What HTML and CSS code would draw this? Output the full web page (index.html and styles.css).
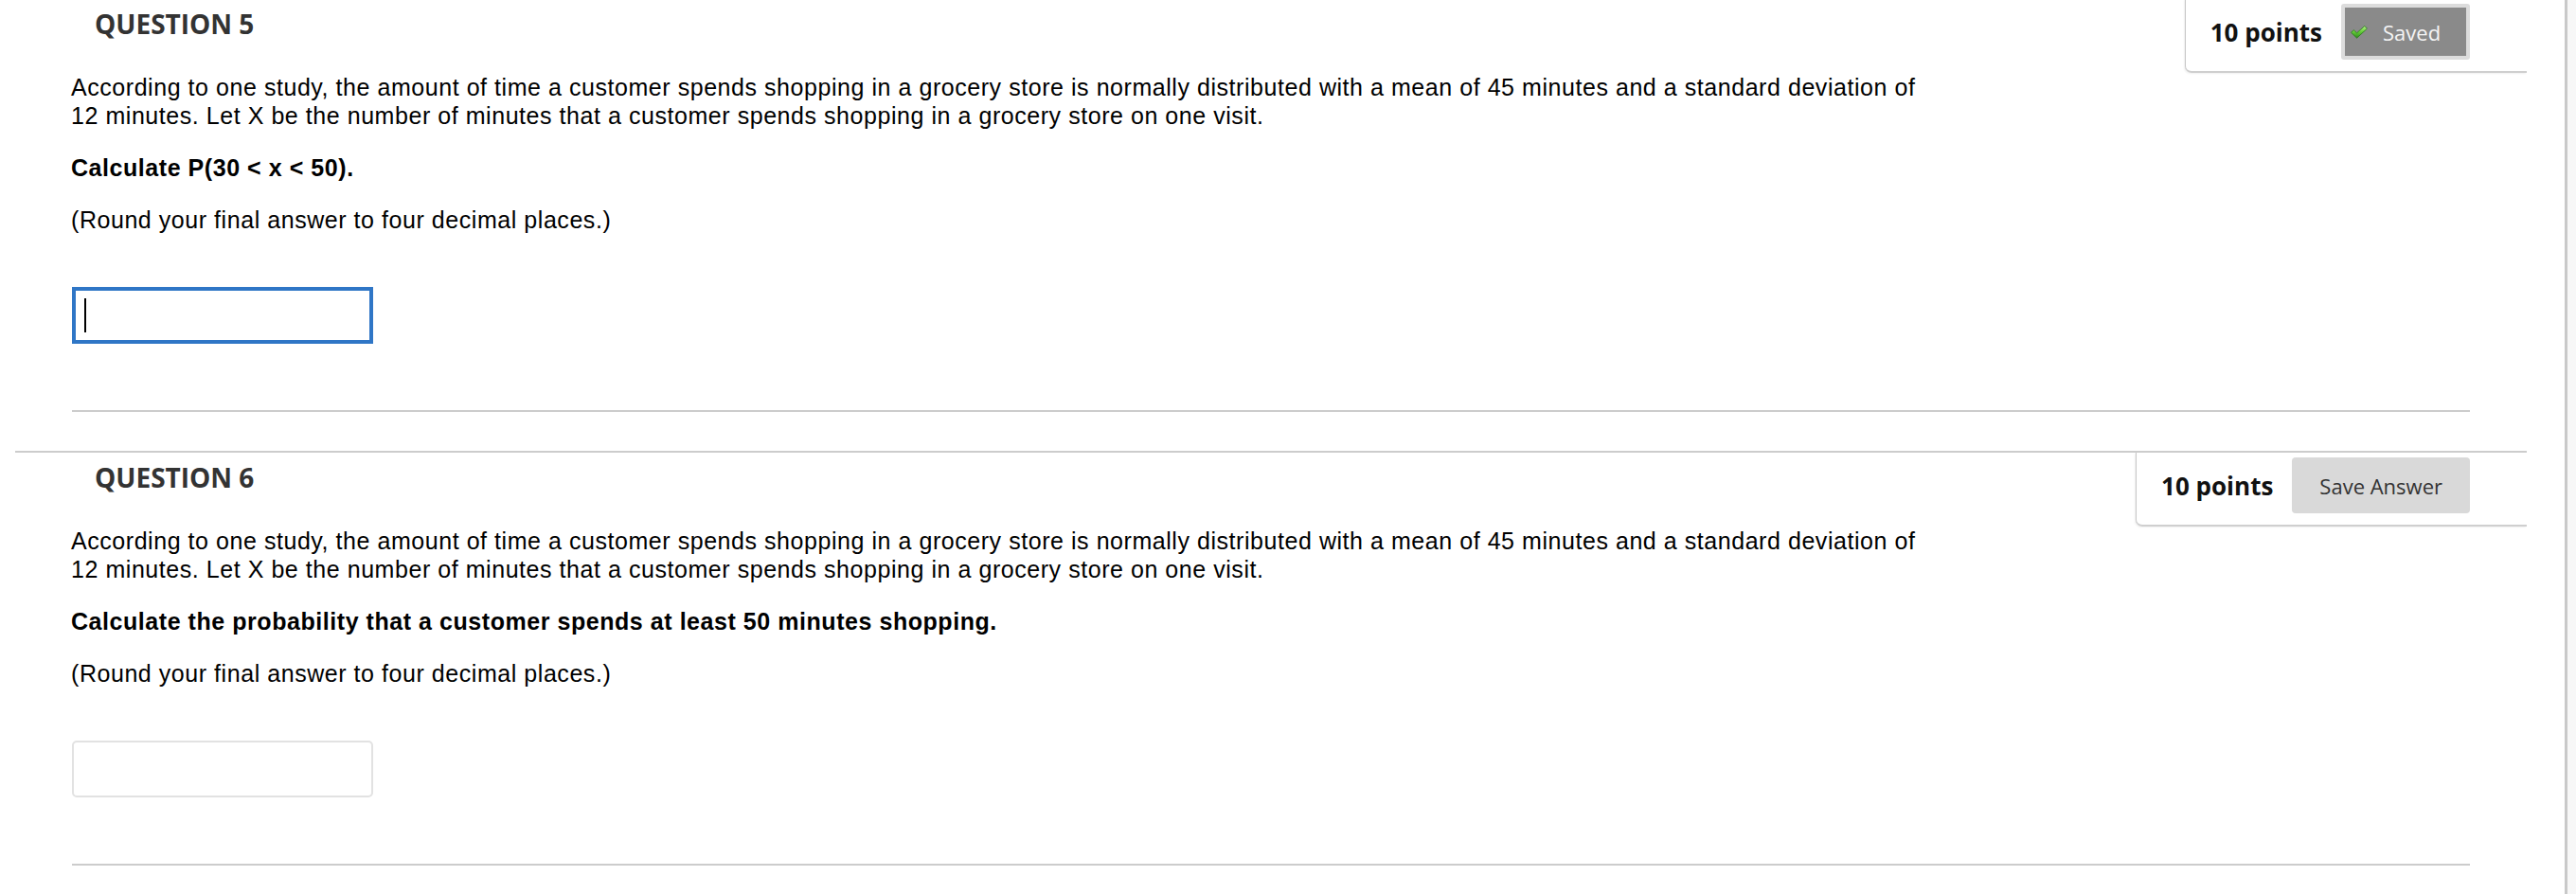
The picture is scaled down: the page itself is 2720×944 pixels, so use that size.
FILE: index.html
```html
<!DOCTYPE html>
<html lang="en">
<head>
<meta charset="utf-8">
<title>Questions</title>
<link rel="stylesheet" href="styles.css">
</head>
<body>
<div class="layout">
  <main class="page">
    <section class="question">
      <div class="q-head">
        <h2 class="q-title">QUESTION 5</h2>
        <div class="points-card">
          <span class="points">10 points</span>
          <span class="btn-saved">
            <svg class="check" width="18" height="14" viewBox="0 0 18 14" aria-hidden="true">
              <defs>
                <linearGradient id="g1" x1="0" y1="0" x2="0" y2="1">
                  <stop offset="0" stop-color="#b8f28c"/>
                  <stop offset="0.5" stop-color="#62c936"/>
                  <stop offset="1" stop-color="#2c8a1c"/>
                </linearGradient>
              </defs>
              <path d="M0.6 7.4 L3.2 4.6 L6.6 7.8 L14.8 0.4 L17.4 3.2 L6.6 13.2 Z" fill="url(#g1)" stroke="#2a7a1e" stroke-width="0.8" stroke-linejoin="round"/>
            </svg>
            <span>Saved</span>
          </span>
        </div>
      </div>
      <div class="q-body">
        <div class="q-text">
          <p>According to one study, the amount of time a customer spends shopping in a grocery store is normally distributed with a mean of 45 minutes and a standard deviation of 12 minutes. Let X be the number of minutes that a customer spends shopping in a grocery store on one visit.</p>
          <p><strong>Calculate P(30 &lt; x &lt; 50).</strong></p>
          <p>(Round your final answer to four decimal places.)</p>
        </div>
        <div class="answer answer-focus"><span class="caret"></span></div>
        <div class="rule"></div>
      </div>
    </section>

    <section class="question">
      <div class="q-head">
        <h2 class="q-title">QUESTION 6</h2>
        <div class="points-card">
          <span class="points">10 points</span>
          <span class="btn-save">Save Answer</span>
        </div>
      </div>
      <div class="q-body">
        <div class="q-text">
          <p>According to one study, the amount of time a customer spends shopping in a grocery store is normally distributed with a mean of 45 minutes and a standard deviation of 12 minutes. Let X be the number of minutes that a customer spends shopping in a grocery store on one visit.</p>
          <p><strong>Calculate the probability that a customer spends at least 50 minutes shopping.</strong></p>
          <p>(Round your final answer to four decimal places.)</p>
        </div>
        <div class="answer"></div>
        <div class="rule"></div>
      </div>
    </section>
  </main>
  <div class="side-strip"></div>
</div>
</body>
</html>
```
FILE: styles.css
```css
html, body {
  margin: 0;
  padding: 0;
  background: #ffffff;
}

body {
  overflow: hidden;
}

.layout {
  display: flex;
  min-height: 944px;
}

.page {
  flex: 1;
  margin-top: -3px;
  padding: 0 40px 0 16px;
}

.side-strip {
  width: 9px;
  border-left: 3px solid #c9c9c9;
  background: #f7f7f7;
}

.question {
  border-top: 2px solid #cccccc;
  padding-bottom: 41px;
}

.q-head {
  display: flex;
  justify-content: space-between;
  align-items: flex-start;
}

.q-title {
  margin: 8px 0 0 84px;
  font-family: "Open Sans", "Noto Sans", sans-serif;
  font-weight: 700;
  font-size: 28px;
  line-height: 36px;
  color: #333333;
}

.points-card {
  display: flex;
  align-items: center;
  gap: 20px;
  padding: 5px 60px 12px 26px;
  border-left: 1px solid #c6c6c6;
  border-bottom: 2px solid #cfcfcf;
  border-bottom-left-radius: 7px;
  box-shadow: -1px 1px 2px rgba(0, 0, 0, 0.06);
}

.points {
  font-family: "Open Sans", "Noto Sans", sans-serif;
  font-weight: 700;
  font-size: 26px;
  color: #111111;
}

.btn-saved {
  display: flex;
  align-items: center;
  box-sizing: border-box;
  height: 59px;
  width: 136px;
  padding: 0 0 0 6px;
  border: 4px solid #dcdcdc;
  border-radius: 3px;
  background: #8a8a8a;
  font-family: "Open Sans", "Noto Sans", sans-serif;
  font-size: 22px;
  color: #f4f4f4;
}

.check {
  margin-right: 16px;
  flex: none;
}

.btn-save {
  display: flex;
  align-items: center;
  box-sizing: border-box;
  height: 59px;
  padding: 0 29px;
  border-radius: 4px;
  background: #d9d9d9;
  font-family: "Open Sans", "Noto Sans", sans-serif;
  font-size: 22px;
  color: #333333;
}

.q-body {
  padding: 0 60px 0 59px;
}

.q-text {
  max-width: 1968px;
  font-family: "Liberation Sans", Arial, Helvetica, sans-serif;
  font-size: 25px;
  letter-spacing: 0.55px;
  line-height: 30px;
  color: #000000;
}

.q-text p {
  margin: 0 0 25px;
}

.q-text p:last-child {
  margin-bottom: 0;
}

.answer {
  box-sizing: border-box;
  width: 318px;
  height: 60px;
  margin: 56px 0 0 1px;
  border: 2px solid #e2e2e2;
  border-radius: 5px;
  background: #ffffff;
}

.answer-focus {
  border: 4px solid #2f76c6;
  border-radius: 0;
  padding: 8px 0 0 9px;
}

.caret {
  display: block;
  width: 2px;
  height: 36px;
  background: #000000;
}

.rule {
  height: 2px;
  margin: 70px 0 0 1px;
  background: #cccccc;
}
```
